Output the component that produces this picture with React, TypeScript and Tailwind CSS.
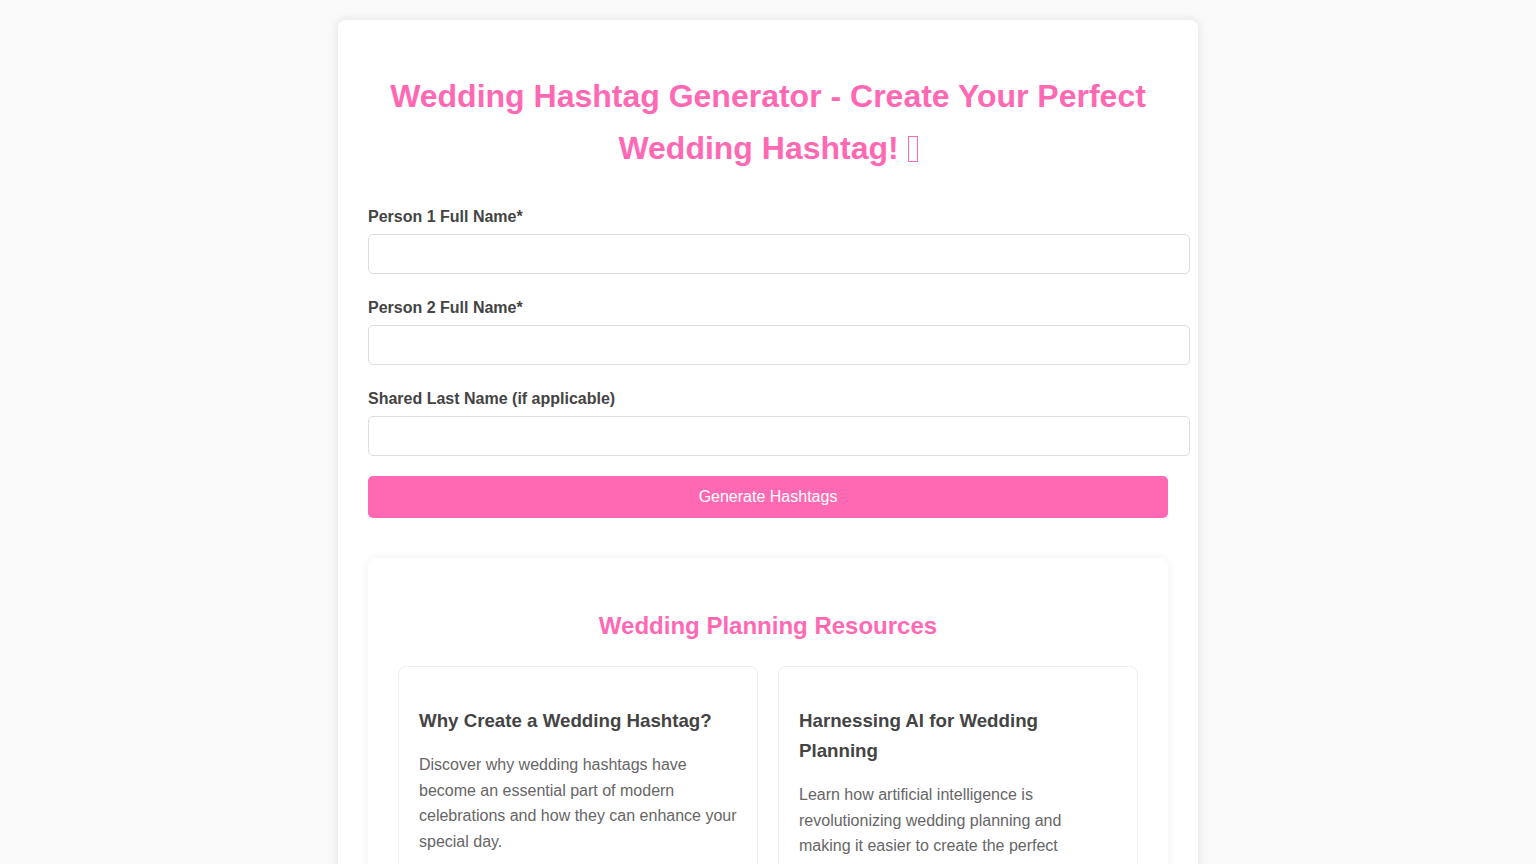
import React from "react"

const fields = [
  { id: "person1", label: "Person 1 Full Name*" },
  { id: "person2", label: "Person 2 Full Name*" },
  { id: "lastName", label: "Shared Last Name (if applicable)" },
]

const resources = [
  {
    title: "Why Create a Wedding Hashtag?",
    text: "Discover why wedding hashtags have become an essential part of modern celebrations and how they can enhance your special day.",
  },
  {
    title: "Harnessing AI for Wedding Planning",
    text: "Learn how artificial intelligence is revolutionizing wedding planning and making it easier to create the perfect wedding hashtag.",
  },
]

export default function App() {
  return (
    <div
      className="min-h-screen bg-[#f9f9f9] p-5 text-[#444] leading-[1.6]"
      style={{ fontFamily: '"Liberation Sans", Arial, sans-serif' }}
    >
      <div className="mx-auto w-[860px] rounded-lg bg-white p-[30px] shadow-[0_0_10px_rgba(0,0,0,0.1)]">
        {/* Title - the emoji shows as a missing-glyph box in the original */}
        <h1 className="mt-5 mb-[31px] text-center text-[32px] font-bold leading-[52px] text-[#ff69b4]">
          Wedding Hashtag Generator - Create Your Perfect Wedding Hashtag!{" "}
          <span className="inline-block h-[26px] w-[10px] translate-y-[3px] border border-[#ff69b4] align-baseline" />
        </h1>

        {/* Form */}
        <form onSubmit={(e) => e.preventDefault()}>
          {fields.map((f, i) => (
            <div key={f.id} className={i === fields.length - 1 ? "mb-5" : "mb-[22px]"}>
              <label htmlFor={f.id} className="mb-[5px] block text-base font-bold text-[#444]">
                {f.label}
              </label>
              <input
                id={f.id}
                type="text"
                className="box-content block h-[18px] w-full rounded-[5px] border border-[#ddd] bg-white p-[10px] text-base outline-none"
              />
            </div>
          ))}
          <button
            type="submit"
            className="block h-[42px] w-full rounded-[5px] bg-[#ff69b4] text-base leading-[18px] text-white"
          >
            Generate Hashtags
          </button>
        </form>

        {/* Resources */}
        <div className="mt-10 rounded-lg bg-white p-[30px] shadow-[0_0_10px_rgba(0,0,0,0.06)]">
          <h2 className="mt-[19px] mb-[21px] text-center text-2xl font-bold leading-[38px] text-[#ff69b4]">
            Wedding Planning Resources
          </h2>
          <div className="grid grid-cols-2 gap-5">
            {resources.map((r) => (
              <div key={r.title} className="rounded-lg border border-[#eee] bg-white p-5">
                <h3 className="mt-[19px] mb-4 text-[18.72px] font-bold leading-[30px] text-[#444]">{r.title}</h3>
                <p className="text-base leading-[25.6px] text-[#666]">{r.text}</p>
              </div>
            ))}
          </div>
        </div>
      </div>
    </div>
  )
}
